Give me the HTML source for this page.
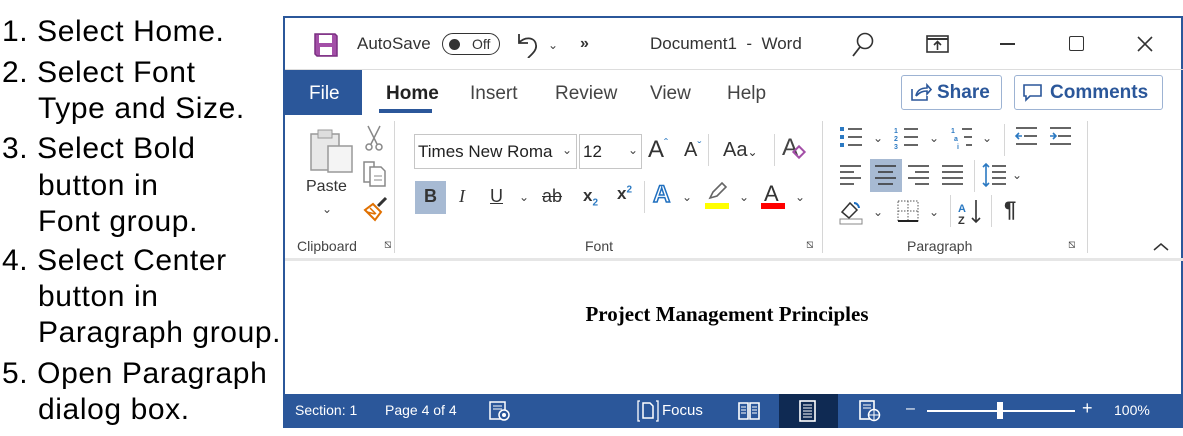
<!DOCTYPE html>
<html><head><meta charset="utf-8"><style>
*{margin:0;padding:0;box-sizing:border-box}
body{width:1183px;height:436px;background:#fff;position:relative;overflow:hidden;font-family:"Liberation Sans",Arial,sans-serif}
.a{position:absolute;white-space:nowrap}
.l{font-size:30px;letter-spacing:0.6px;color:#000;line-height:1}
.ui{font-family:"Liberation Sans",sans-serif;color:#333}
.sb{color:#fff;font-size:14px}
.g{font-size:14px;color:#444}
.sep{position:absolute;width:1px;background:#d6d6d6}
.chev{font-size:12px;color:#444}
</style></head><body>
<div class="a l" style="left:2px;top:17px">1. Select Home.</div>
<div class="a l" style="left:2px;top:58px">2. Select Font</div>
<div class="a l" style="left:38px;top:94px">Type and Size.</div>
<div class="a l" style="left:2px;top:134px">3. Select Bold</div>
<div class="a l" style="left:38px;top:171px">button in</div>
<div class="a l" style="left:38px;top:207px">Font group.</div>
<div class="a l" style="left:2px;top:246px">4. Select Center</div>
<div class="a l" style="left:38px;top:282px">button in</div>
<div class="a l" style="left:38px;top:318px">Paragraph group.</div>
<div class="a l" style="left:2px;top:359px">5. Open Paragraph</div>
<div class="a l" style="left:38px;top:395px">dialog box.</div>

<!-- window -->
<div class="a" style="left:283px;top:16px;width:900px;height:412px;border:2px solid #2b579a;border-bottom:none;background:#fff"></div>
<div class="a" style="left:285px;top:69px;width:898px;height:1px;background:#ddd"></div>
<svg class="a" style="left:313px;top:32px" width="26" height="26" viewBox="0 0 26 26"><path d="M2 2h20l2 2v20H4l-2-2z" fill="#a34fa7" stroke="#7a2f80" stroke-width="1.5"/><rect x="6" y="3" width="13" height="8" fill="#fff"/><rect x="7" y="15" width="12" height="8" fill="#fff"/></svg>
<div class="a ui" style="left:357px;top:34px;font-size:17px">AutoSave</div>
<div class="a" style="left:442px;top:33px;width:58px;height:22px;border:1.5px solid #333;border-radius:11px"></div>
<div class="a" style="left:449px;top:39px;width:11px;height:11px;border-radius:50%;background:#333"></div>
<div class="a ui" style="left:472px;top:36px;font-size:14px">Off</div>
<svg class="a" style="left:515px;top:30px" width="26" height="28" viewBox="0 0 26 28"><path d="M4 4v9h9M4 13c4-6 16-7 17 2c1 5-4 9-8 13" fill="none" stroke="#333" stroke-width="1.8"/></svg>
<div class="a chev" style="left:548px;top:38px">⌄</div>
<div class="a ui" style="left:580px;top:35px;font-size:16px;font-weight:bold">»</div>
<div class="a ui" style="left:650px;top:34px;font-size:17px">Document1 &nbsp;- &nbsp;Word</div>
<svg class="a" style="left:850px;top:31px" width="26" height="28" viewBox="0 0 26 28"><circle cx="15" cy="10" r="7.5" fill="none" stroke="#333" stroke-width="1.6"/><path d="M10 16 3 25" stroke="#333" stroke-width="1.8"/></svg>
<svg class="a" style="left:926px;top:34px" width="24" height="20" viewBox="0 0 24 20"><rect x="1" y="2" width="21" height="16" fill="none" stroke="#333" stroke-width="1.6"/><path d="M1 5h21" stroke="#333" stroke-width="2"/><path d="M11.5 16V8M8 11l3.5-3.5L15 11" fill="none" stroke="#333" stroke-width="1.6"/></svg>
<div class="a" style="left:1000px;top:43px;width:15px;height:1.5px;background:#333"></div>
<div class="a" style="left:1069px;top:36px;width:15px;height:15px;border:1.6px solid #333;border-radius:2px"></div>
<svg class="a" style="left:1136px;top:35px" width="18" height="18"><path d="M2 2l14 14M16 2 2 16" stroke="#333" stroke-width="1.6"/></svg>

<!-- tabs -->
<div class="a" style="left:285px;top:70px;width:77px;height:45px;background:#2b579a"></div>
<div class="a" style="left:309px;top:83px;font-size:19px;color:#fff">File</div>
<div class="a ui" style="left:386px;top:83px;font-size:19px;font-weight:bold;color:#222">Home</div>
<div class="a" style="left:379px;top:109px;width:53px;height:4px;background:#2b579a"></div>
<div class="a ui" style="left:470px;top:83px;font-size:19px;color:#444">Insert</div>
<div class="a ui" style="left:555px;top:83px;font-size:19px;color:#444">Review</div>
<div class="a ui" style="left:650px;top:83px;font-size:19px;color:#444">View</div>
<div class="a ui" style="left:727px;top:83px;font-size:19px;color:#444">Help</div>
<div class="a" style="left:901px;top:75px;width:101px;height:35px;border:1px solid #9db3d3;border-radius:3px"></div>
<svg class="a" style="left:910px;top:82px" width="22" height="20" viewBox="0 0 22 20"><path d="M2 7v11h15v-4M6 14c1-6 5-8 11-8V3l4 4.5-4 4.5V9c-4 0-7 1-11 5" fill="none" stroke="#2b579a" stroke-width="1.6"/></svg>
<div class="a" style="left:937px;top:82px;font-size:19px;color:#2b579a;font-weight:bold">Share</div>
<div class="a" style="left:1014px;top:75px;width:149px;height:35px;border:1px solid #9db3d3;border-radius:3px"></div>
<svg class="a" style="left:1022px;top:83px" width="22" height="20" viewBox="0 0 22 20"><path d="M2 2h17v11H8l-4 4v-4H2z" fill="none" stroke="#2b579a" stroke-width="1.6"/></svg>
<div class="a" style="left:1050px;top:82px;font-size:19px;color:#2b579a;font-weight:bold">Comments</div>

<!-- ribbon -->
<div class="a" style="left:285px;top:258px;width:898px;height:3px;background:#e6e6e6"></div>
<div class="sep" style="left:394px;top:121px;height:132px"></div>
<div class="sep" style="left:822px;top:121px;height:132px"></div>
<div class="sep" style="left:1087px;top:121px;height:132px"></div>
<svg class="a" style="left:308px;top:126px" width="48" height="48" viewBox="0 0 48 48"><rect x="3" y="8" width="28" height="36" fill="#e8e8e8" stroke="#999" stroke-width="1.5"/><rect x="10" y="4" width="14" height="8" fill="#ddd" stroke="#999"/><rect x="20" y="20" width="24" height="26" fill="#f4f4f4" stroke="#999" stroke-width="1.5"/></svg>
<div class="a ui" style="left:306px;top:178px;font-size:16px">Paste</div>
<div class="a chev" style="left:322px;top:202px">⌄</div>
<svg class="a" style="left:362px;top:124px" width="24" height="28" viewBox="0 0 24 28"><path d="M6 2l9 18M18 2 9 20" stroke="#888" stroke-width="1.5"/><circle cx="7" cy="23" r="3" fill="none" stroke="#888" stroke-width="1.5"/><circle cx="17" cy="23" r="3" fill="none" stroke="#888" stroke-width="1.5"/></svg>
<svg class="a" style="left:362px;top:160px" width="26" height="28" viewBox="0 0 26 28"><path d="M2 2h10v20H2z" fill="#fff" stroke="#888" stroke-width="1.5"/><path d="M8 7h11l4 4v15H8z" fill="#fff" stroke="#888" stroke-width="1.5"/><path d="M12 16h8M12 20h8" stroke="#888"/></svg>
<svg class="a" style="left:362px;top:196px" width="28" height="26" viewBox="0 0 28 26"><path d="M3 14l10 10 6-8-8-8z" fill="#fff" stroke="#e07000" stroke-width="2"/><path d="M5 16l8 2M8 12l6 6" stroke="#e07000" stroke-width="1.5"/><path d="M16 10l8-8" stroke="#333" stroke-width="3"/></svg>
<div class="a g" style="left:297px;top:238px">Clipboard</div>
<div class="a g" style="left:384px;top:237px;font-size:12px">⧅</div>
<!-- font -->
<div class="a" style="left:414px;top:134px;width:163px;height:35px;border:1px solid #c6c6c6"></div>
<div class="a" style="left:418px;top:142px;font-size:17px;color:#222">Times New Roma</div>
<div class="a chev" style="left:562px;top:143px">⌄</div>
<div class="a" style="left:579px;top:134px;width:63px;height:35px;border:1px solid #c6c6c6"></div>
<div class="a" style="left:583px;top:142px;font-size:17px;color:#222">12</div>
<div class="a chev" style="left:628px;top:143px">⌄</div>
<div class="a ui" style="left:648px;top:136px;font-size:24px;color:#333">A<span style="font-size:12px;color:#2b79c2;vertical-align:top">ˆ</span></div>
<div class="a ui" style="left:684px;top:139px;font-size:20px;color:#333">A<span style="font-size:12px;color:#2b79c2;vertical-align:top">ˇ</span></div>
<div class="sep" style="left:708px;top:134px;height:32px"></div>
<div class="a ui" style="left:723px;top:139px;font-size:20px">Aa<span style="font-size:12px">⌄</span></div>
<div class="sep" style="left:774px;top:134px;height:32px"></div>
<div class="a ui" style="left:782px;top:134px;font-size:24px;color:#444">A</div>
<div class="a" style="left:794px;top:147px;width:10px;height:10px;border:2px solid #a34fa7;transform:rotate(45deg)"></div>
<div class="a" style="left:415px;top:181px;width:31px;height:33px;background:#a7bad3"></div>
<div class="a ui" style="left:424px;top:186px;font-size:18px;font-weight:bold">B</div>
<div class="a ui" style="left:459px;top:186px;font-size:18px;font-style:italic;font-family:'Liberation Serif',serif">I</div>
<div class="a ui" style="left:490px;top:186px;font-size:18px;text-decoration:underline">U</div>
<div class="a chev" style="left:519px;top:190px">⌄</div>
<div class="a ui" style="left:542px;top:186px;font-size:18px;text-decoration:line-through">ab</div>
<div class="a ui" style="left:583px;top:186px;font-size:17px;font-weight:bold">x<sub style="font-size:10px;color:#2b79c2">2</sub></div>
<div class="a ui" style="left:617px;top:184px;font-size:17px;font-weight:bold">x<sup style="font-size:10px;color:#2b79c2">2</sup></div>
<div class="sep" style="left:644px;top:181px;height:32px"></div>
<div class="a" style="left:653px;top:181px;font-size:24px;font-weight:bold;color:#fff;-webkit-text-stroke:1.5px #1f6fbf">A</div>
<div class="a chev" style="left:682px;top:190px">⌄</div>
<svg class="a" style="left:706px;top:182px" width="24" height="20" viewBox="0 0 24 20"><path d="M4 16l3-6 9-9 4 4-9 9z" fill="none" stroke="#666" stroke-width="1.6"/></svg>
<div class="a" style="left:705px;top:203px;width:24px;height:6px;background:#ffff00"></div>
<div class="a chev" style="left:739px;top:190px">⌄</div>
<div class="a ui" style="left:764px;top:181px;font-size:22px">A</div>
<div class="a" style="left:761px;top:203px;width:24px;height:6px;background:#f00"></div>
<div class="a chev" style="left:795px;top:190px">⌄</div>
<div class="a g" style="left:585px;top:238px">Font</div>
<div class="a g" style="left:806px;top:237px;font-size:12px">⧅</div>
<!-- paragraph -->
<svg class="a" style="left:838px;top:124px" width="250" height="105" viewBox="0 0 250 105">
<g fill="#2b79c2"><rect x="2" y="3" width="4" height="4"/><rect x="2" y="11" width="4" height="4"/><rect x="2" y="19" width="4" height="4"/></g>
<g stroke="#333" stroke-width="1.6"><path d="M10 5h14M10 13h14M10 21h14"/><path d="M66 5h14M66 13h14M66 21h14"/><path d="M124 5h10M126 13h8M128 21h6"/></g>
<text x="56" y="9" font-size="7" fill="#2b79c2" font-family="Liberation Sans" font-weight="bold">1</text>
<text x="56" y="17" font-size="7" fill="#2b79c2" font-family="Liberation Sans" font-weight="bold">2</text>
<text x="56" y="25" font-size="7" fill="#2b79c2" font-family="Liberation Sans" font-weight="bold">3</text>
<text x="113" y="9" font-size="7" fill="#2b79c2" font-family="Liberation Sans" font-weight="bold">1</text>
<text x="116" y="17" font-size="7" fill="#2b79c2" font-family="Liberation Sans" font-weight="bold">a</text>
<text x="119" y="25" font-size="7" fill="#2b79c2" font-family="Liberation Sans" font-weight="bold">i</text>
<g stroke="#333" stroke-width="1.6"><path d="M178 4h21M186 12h13M178 20h21M212 4h21M220 12h13M212 20h21"/></g>
<path d="M184 12h-6m3-3-3 3 3 3M212 12h6m-3-3 3 3-3 3" stroke="#2b79c2" stroke-width="1.6" fill="none"/>
<g stroke="#333" stroke-width="1.6"><path d="M2 42h21M2 48h14M2 54h21M2 60h14"/></g>
<rect x="32" y="35" width="32" height="33" fill="#a7bad3"/>
<g stroke="#333" stroke-width="1.6"><path d="M37 42h21M40 48h15M37 54h21M40 60h15"/><path d="M70 42h21M77 48h14M70 54h21M77 60h14"/><path d="M104 42h21M104 48h21M104 54h21M104 60h21"/><path d="M154 42h14M154 48h14M154 54h14M154 60h14"/></g>
<path d="M148 40v22m-3-19 3-3 3 3m-6 16 3 3 3-3" stroke="#2b79c2" stroke-width="1.6" fill="none"/>
<path d="M4 88l8-9 7 7-8 8z" fill="none" stroke="#333" stroke-width="1.5"/>
<path d="M16 79c3 0 5 3 5 5" stroke="#1f6fbf" stroke-width="2" fill="none"/>
<rect x="2" y="95" width="22" height="5" fill="#fff" stroke="#888"/>
<rect x="60" y="77" width="20" height="20" fill="none" stroke="#555" stroke-dasharray="1.5 1.5"/>
<path d="M70 77v20M60 87h20" stroke="#555" stroke-dasharray="1.5 1.5"/>
<path d="M60 97h20" stroke="#222" stroke-width="2"/>
<text x="120" y="88" font-size="11" fill="#2b79c2" font-family="Liberation Sans" font-weight="bold">A</text>
<text x="120" y="100" font-size="11" fill="#333" font-family="Liberation Sans" font-weight="bold">Z</text>
<path d="M138 76v22m-4-4 4 4 4-4" stroke="#333" stroke-width="1.6" fill="none"/>
</svg>
<div class="a chev" style="left:873px;top:131px">⌄</div>
<div class="a chev" style="left:929px;top:131px">⌄</div>
<div class="a chev" style="left:982px;top:131px">⌄</div>
<div class="sep" style="left:1004px;top:124px;height:32px"></div>
<div class="sep" style="left:974px;top:160px;height:32px"></div>
<div class="a chev" style="left:1012px;top:168px">⌄</div>
<div class="a chev" style="left:873px;top:205px">⌄</div>
<div class="a chev" style="left:929px;top:205px">⌄</div>
<div class="sep" style="left:950px;top:195px;height:32px"></div>
<div class="sep" style="left:991px;top:195px;height:32px"></div>
<div class="a ui" style="left:1004px;top:197px;font-size:22px;font-weight:bold">¶</div>
<div class="a g" style="left:907px;top:238px">Paragraph</div>
<div class="a g" style="left:1068px;top:237px;font-size:12px">⧅</div>
<svg class="a" style="left:1153px;top:242px" width="16" height="10"><path d="M1 8l7-6 7 6" stroke="#333" stroke-width="1.5" fill="none"/></svg>

<div class="a" style="left:285px;top:302px;width:884px;text-align:center;font-family:'Liberation Serif',serif;font-weight:bold;font-size:21px;color:#000">Project Management Principles</div>

<div class="a" style="left:283px;top:394px;width:900px;height:34px;background:#2b579a"></div>
<div class="a" style="left:779px;top:394px;width:59px;height:34px;background:#0f2a53"></div>
<div class="a sb" style="left:295px;top:402px">Section: 1</div>
<div class="a sb" style="left:385px;top:402px">Page 4 of 4</div>
<svg class="a" style="left:488px;top:401px" width="24" height="20" viewBox="0 0 24 20"><rect x="2" y="1" width="15" height="17" fill="none" stroke="#fff" stroke-width="1.5"/><path d="M5 5h9M5 8h9" stroke="#fff"/><circle cx="16" cy="14" r="5" fill="#2b579a" stroke="#fff" stroke-width="1.5"/><circle cx="16" cy="14" r="2" fill="#fff"/></svg>
<svg class="a" style="left:637px;top:400px" width="22" height="22" viewBox="0 0 22 22"><path d="M3 1H1v20h2M19 1h2v20h-2" stroke="#fff" fill="none" stroke-width="1.3"/><path d="M6 3h7l3 3v12H6z" fill="none" stroke="#fff" stroke-width="1.5"/></svg>
<div class="a sb" style="left:662px;top:402px;font-size:15px">Focus</div>
<svg class="a" style="left:737px;top:401px" width="24" height="20" viewBox="0 0 24 20"><path d="M2 2h9v16H2zM13 2h9v16h-9z" fill="none" stroke="#fff" stroke-width="1.6"/><path d="M4 6h5M4 9h5M4 12h5M15 6h5M15 9h5M15 12h5" stroke="#fff"/></svg>
<svg class="a" style="left:798px;top:400px" width="20" height="22" viewBox="0 0 20 22"><rect x="2" y="1" width="15" height="20" fill="none" stroke="#fff" stroke-width="1.6"/><path d="M5 5h9M5 8h9M5 11h9M5 14h9M5 17h9" stroke="#fff"/></svg>
<svg class="a" style="left:858px;top:400px" width="24" height="22" viewBox="0 0 24 22"><rect x="2" y="1" width="14" height="18" fill="none" stroke="#fff" stroke-width="1.6"/><path d="M5 5h8M5 8h8" stroke="#fff"/><circle cx="16" cy="15" r="5.5" fill="#2b579a" stroke="#fff" stroke-width="1.5"/><path d="M10.5 15h11M16 9.5v11" stroke="#fff"/></svg>
<div class="a sb" style="left:906px;top:400px;font-size:16px">–</div>
<div class="a" style="left:927px;top:410px;width:148px;height:2px;background:#fff"></div>
<div class="a" style="left:997px;top:402px;width:6px;height:17px;background:#fff"></div>
<div class="a sb" style="left:1082px;top:398px;font-size:18px">+</div>
<div class="a sb" style="left:1114px;top:402px">100%</div>
</body></html>
